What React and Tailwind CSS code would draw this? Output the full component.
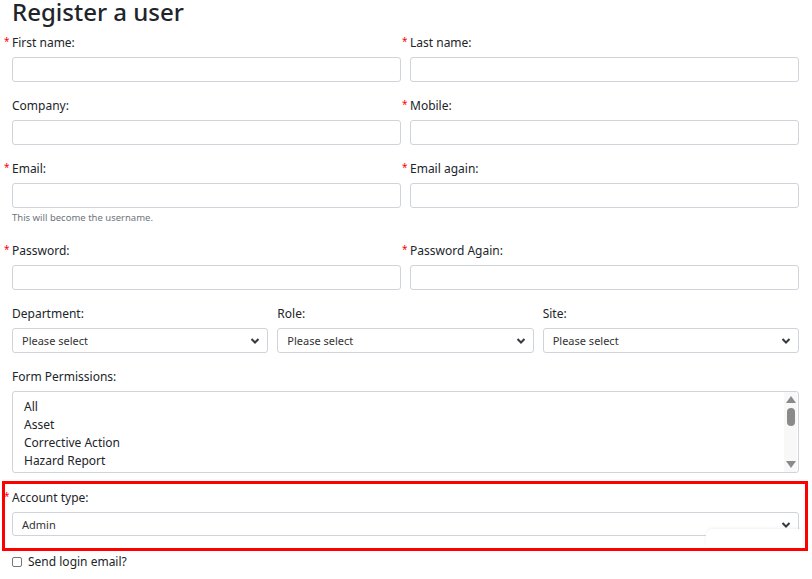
import React from "react";

const Star = () => (
  <span className="absolute left-[-8px] top-[-1px] text-[10px] leading-[18px] text-[#ff0000]">*</span>
);

const Label = ({ children, req }) => (
  <div className="relative h-[18px] leading-[20px] text-[12px] text-[#212529] mb-[6px]">
    {req && <Star />}
    {children}
  </div>
);

const Input = () => (
  <input className="block w-full h-[25px] border border-[#ced4da] rounded-[3px] bg-white outline-none" />
);

const Chevron = () => (
  <svg className="absolute right-[7px] top-[8px]" width="10" height="8" viewBox="0 0 10 8">
    <path d="M1.5 2 L5 5.5 L8.5 2" fill="none" stroke="#343a40" strokeWidth="2" />
  </svg>
);

const Select = ({ value, h = "h-[25px]" }) => (
  <div className={`relative w-full ${h} border border-[#ced4da] rounded-[3px] bg-white`}>
    <div className="pl-[9px] leading-[23px] text-[11px] text-[#333]">{value}</div>
    <Chevron />
  </div>
);

const Field = ({ label, req }) => (
  <div>
    <Label req={req}>{label}</Label>
    <Input />
  </div>
);

const permissions = ["All", "Asset", "Corrective Action", "Hazard Report", "Incident Report"];

export default function App() {
  return (
    <div className="w-[812px] h-[579px] overflow-hidden bg-white pl-[12px] pr-[13px]" style={{ fontFamily: '"Noto Sans", sans-serif' }}>
      <h1 className="text-[24px] leading-[30px] mt-[-3px] mb-[6px] text-[#212529] font-medium">Register a user</h1>

      <div className="grid grid-cols-2 gap-x-[9px] gap-y-[14px]">
        <Field label="First name:" req />
        <Field label="Last name:" req />
        <Field label="Company:" />
        <Field label="Mobile:" req />
        <div>
          <Label req>Email:</Label>
          <Input />
          <div className="mt-[3px] text-[9.5px] leading-[14px] text-[#6c757d]">This will become the username.</div>
        </div>
        <Field label="Email again:" req />
      </div>

      <div className="grid grid-cols-2 gap-x-[9px] mt-[16px]">
        <Field label="Password:" req />
        <Field label="Password Again:" req />
      </div>

      <div className="grid grid-cols-3 gap-x-[9px] mt-[14px]">
        <div>
          <Label>Department:</Label>
          <Select value="Please select" />
        </div>
        <div>
          <Label>Role:</Label>
          <Select value="Please select" />
        </div>
        <div>
          <Label>Site:</Label>
          <Select value="Please select" />
        </div>
      </div>

      <div className="mt-[14px]">
        <Label>Form Permissions:</Label>
        <div className="flex h-[82px] border border-[#ced4da] rounded-[3px] bg-white overflow-hidden">
          <div className="flex-1 pl-[11px] pt-[6px] text-[12px] leading-[18px] text-[#212529]">
            {permissions.map((p) => (
              <div key={p}>{p}</div>
            ))}
          </div>
          <div className="w-[13px] mr-[1px] bg-[#f8f8f8] flex flex-col items-center">
            <div className="mt-[4px] w-0 h-0 border-l-[5px] border-r-[5px] border-b-[7px] border-l-transparent border-r-transparent border-b-[#8a8a8a]" />
            <div className="mt-[5px] w-[8px] h-[18px] rounded-full bg-[#8a8a8a]" />
            <div className="mt-auto mb-[4px] w-0 h-0 border-l-[5px] border-r-[5px] border-t-[7px] border-l-transparent border-r-transparent border-t-[#8a8a8a]" />
          </div>
        </div>
      </div>

      <div className="relative mt-[8px] ml-[-10px] mr-[-9px] border-[3px] border-[#ff0000] pl-[7px] pr-[6px] pt-[4px] h-[70px]">
        <Label req>Account type:</Label>
        <Select value="Admin" h="h-[24px]" />
        <div className="absolute right-[3px] top-[45px] w-[96px] h-[18px] rounded-tl-[6px] bg-white shadow-[0_-1px_3px_rgba(0,0,0,0.06)]" />
      </div>

      <div className="flex items-center mt-[3px] h-[16px]">
        <span className="w-[10px] h-[10px] border border-[#767676] rounded-[2px] bg-white" />
        <span className="ml-[6px] text-[12px] text-[#212529]">Send login email?</span>
      </div>
    </div>
  );
}
